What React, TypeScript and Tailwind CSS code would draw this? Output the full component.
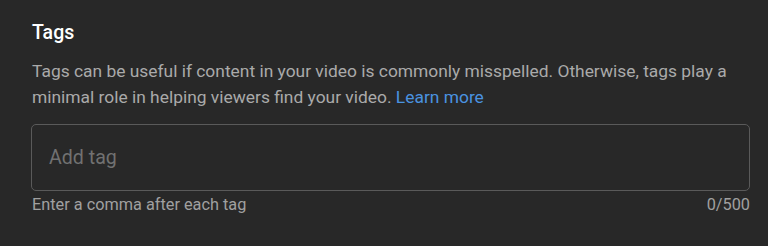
import React from 'react';

const App: React.FC = () => {
  return (
    <div className="w-[768px] h-[246px] bg-[#282828] pl-8 pr-[18px] pt-[21px] font-['Roboto','Noto_Sans',sans-serif] overflow-hidden">
      <h2 className="text-[19.5px] leading-6 font-medium text-white">Tags</h2>
      <p className="mt-[13px] text-[17.4px] leading-[26px] text-[#aaaaaa]">
        Tags can be useful if content in your video is commonly misspelled. Otherwise, tags play a minimal role in helping viewers find your video.{' '}
        <a href="#" className="text-[#4a93e0]">Learn more</a>
      </p>
      <div className="mt-[14px] -ml-px h-[67px] rounded-[5px] border border-[#5a5a5a] flex items-center px-[17px]">
        <input
          placeholder="Add tag"
          className="w-full bg-transparent outline-none text-[19.6px] text-white placeholder:text-[#717171]"
        />
      </div>
      <div className="mt-[4px] flex justify-between text-[16.3px] leading-5 text-[#a0a0a0]">
        <span>Enter a comma after each tag</span>
        <span>0/500</span>
      </div>
    </div>
  );
};

export default App;
